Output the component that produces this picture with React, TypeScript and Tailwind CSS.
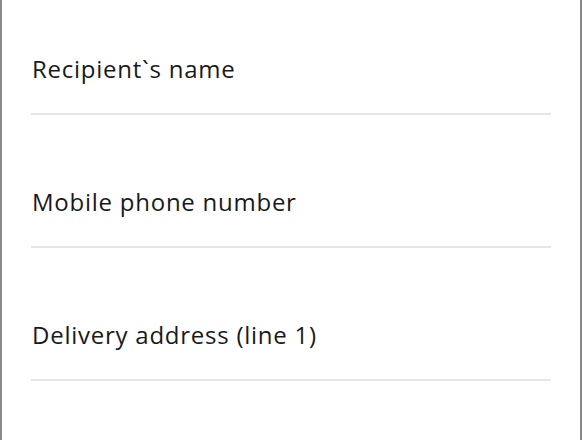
const FIELDS = ["Recipient`s name", "Mobile phone number", "Delivery address (line 1)"];

export default function App() {
  return (
    <div className="h-[440px] w-[582px] overflow-hidden border-x-2 border-[#8a8a8a] bg-white">
      <div className="flex flex-col gap-[71px] px-[29px] pt-[53px]">
        {FIELDS.map((f) => (
          <label key={f} className="block border-b-2 border-[#e6e6e6] pb-[28px]">
            <span
              className="block h-[32px] pl-[1px] text-[24px] leading-[32px] tracking-[0.75px] text-[#1a1a1a]"
              style={{ fontFamily: '"Open Sans", "Noto Sans", sans-serif' }}
            >
              {f}
            </span>
          </label>
        ))}
      </div>
    </div>
  );
}
